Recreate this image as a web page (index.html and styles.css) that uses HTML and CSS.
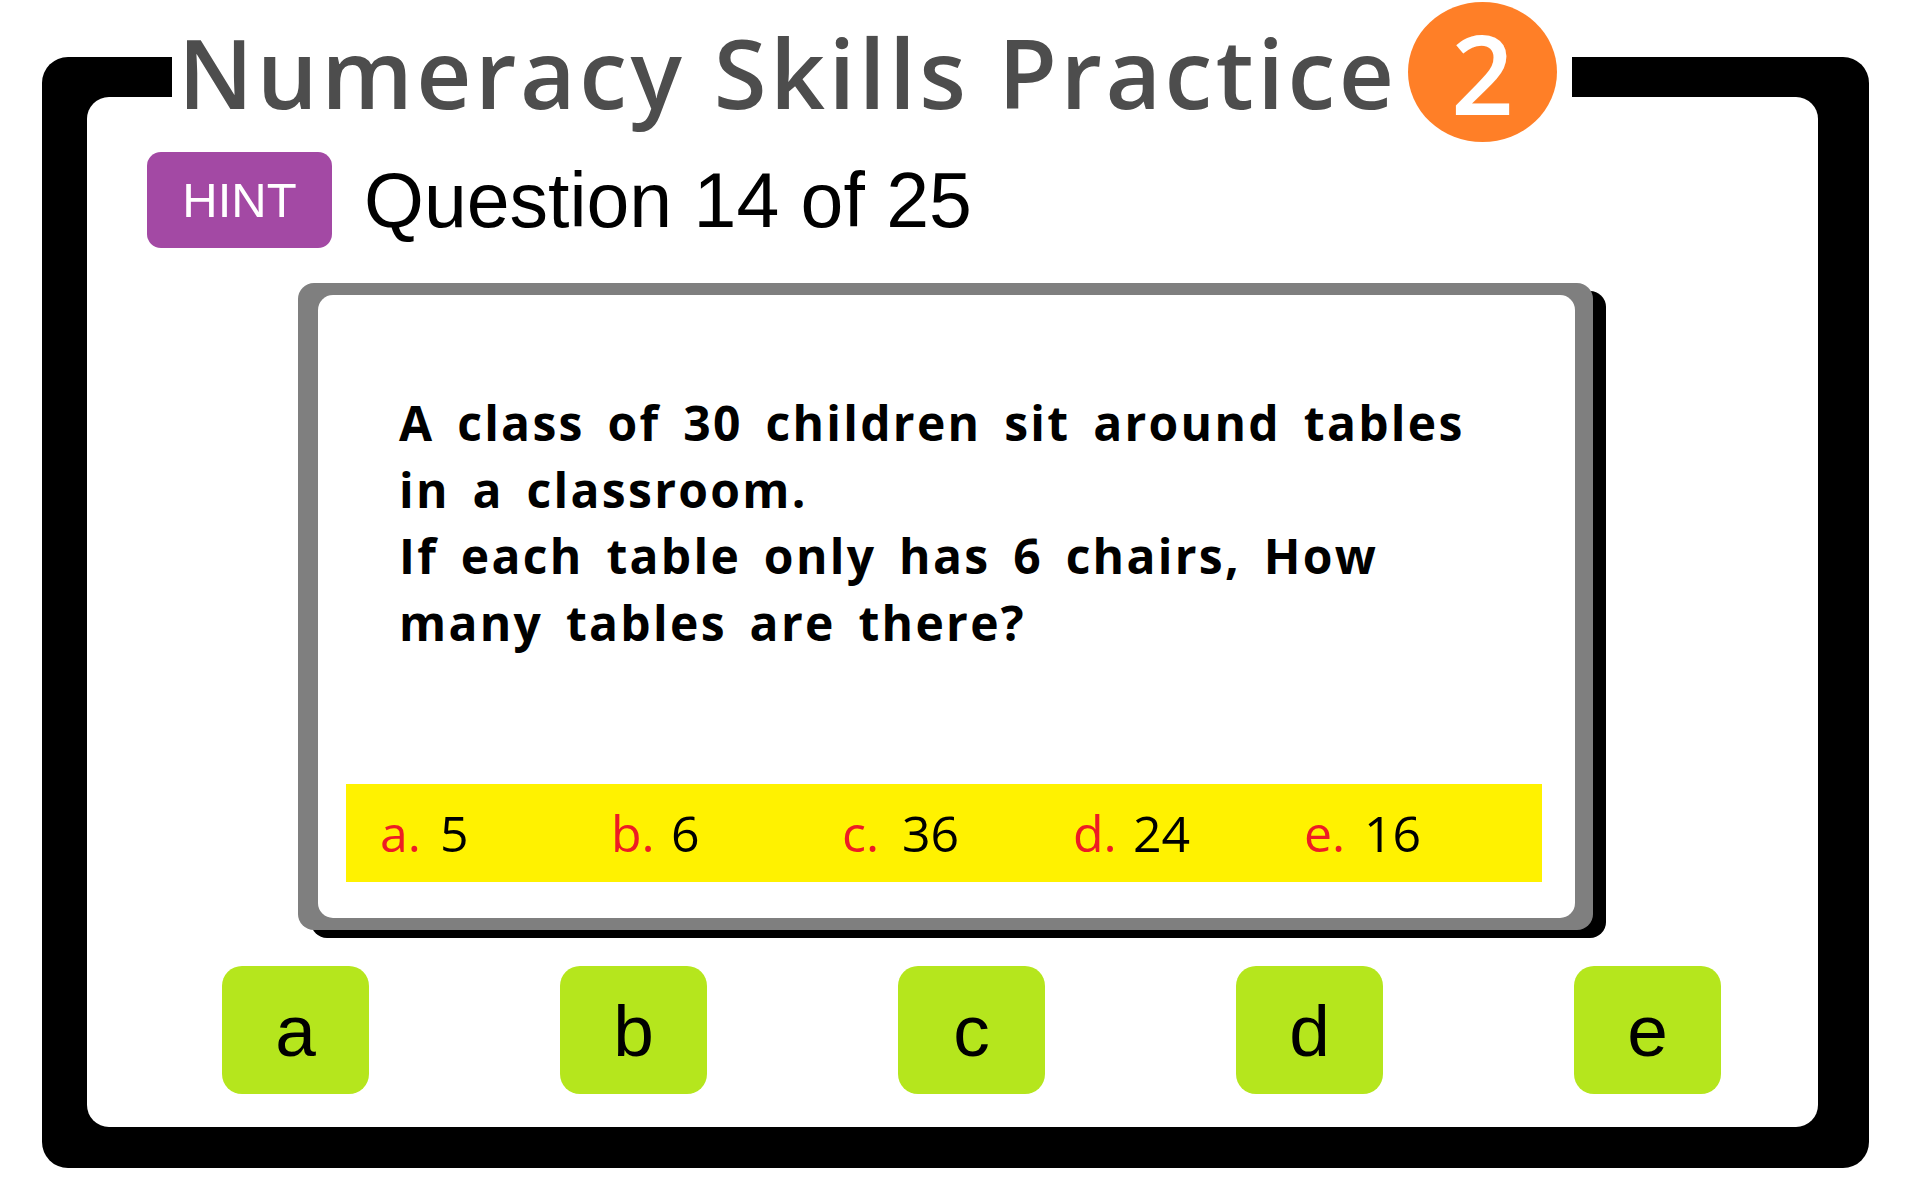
FILE: index.html
```html
<!DOCTYPE html>
<html lang="en">
<head>
<meta charset="utf-8">
<title>Numeracy Skills Practice 2</title>
<link rel="stylesheet" href="styles.css">
</head>
<body>
<div class="frame">
  <div class="title-bar">
    <h1 class="title">Numeracy Skills Practice</h1>
    <div class="badge">2</div>
  </div>
  <div class="inner">
    <div class="head">
      <button class="hint">HINT</button>
      <div class="qnum">Question 14 of 25</div>
    </div>
    <div class="card">
      <div class="card-inner">
        <p class="question">A class of 30 children sit around tables<br>in a classroom.<br>If each table only has 6 chairs, How<br>many tables are there?</p>
        <div class="options">
          <div class="opt"><span class="lbl">a.</span><span class="val">5</span></div>
          <div class="opt"><span class="lbl">b.</span><span class="val">6</span></div>
          <div class="opt"><span class="lbl">c.</span><span class="val">36</span></div>
          <div class="opt"><span class="lbl">d.</span><span class="val">24</span></div>
          <div class="opt"><span class="lbl">e.</span><span class="val">16</span></div>
        </div>
      </div>
    </div>
    <div class="answers">
      <div class="ans">a</div>
      <div class="ans">b</div>
      <div class="ans">c</div>
      <div class="ans">d</div>
      <div class="ans">e</div>
    </div>
  </div>
</div>
</body>
</html>
```
FILE: styles.css
```css
* { box-sizing: border-box; }
html, body { margin: 0; padding: 0; background: #fff; }
body { width: 1920px; height: 1200px; overflow: hidden; font-family: "Liberation Sans", Arial, sans-serif; }

.frame {
  position: relative;
  margin: 57px 0 0 42px;
  width: 1827px;
  height: 1111px;
  padding: 40px 51px 41px 45px;
  background: #000;
  border-radius: 26px;
}

.title-bar {
  position: absolute;
  top: -57px;
  left: 130px;
  width: 1400px;
  height: 146px;
  background: #fff;
  display: flex;
  align-items: flex-start;
  padding: 0 15px 0 6px;
}
.title {
  flex: 0 0 auto;
  margin: 24px 0 0 0;
  font-family: "Open Sans", sans-serif;
  font-weight: 600;
  font-size: 96px;
  line-height: 96px;
  letter-spacing: 3.5px;
  color: #4d4d4d;
  white-space: nowrap;
}
.badge {
  flex: 0 0 auto;
  margin: 2px 0 0 auto;
  width: 149px;
  height: 140px;
  border-radius: 50%;
  background: #ff7f27;
  color: #fff;
  font-family: "Open Sans", sans-serif;
  font-weight: 600;
  font-size: 110px;
  line-height: 140px;
  text-align: center;
}

.inner {
  height: 1030px;
  background: #fff;
  border-radius: 22px;
  padding-top: 55px;
}

.head {
  display: flex;
  align-items: center;
  gap: 32px;
  margin-left: 60px;
  height: 96px;
}
.hint {
  width: 185px;
  height: 96px;
  border: none;
  border-radius: 14px;
  background: #a349a4;
  color: #fff;
  font-family: "Liberation Sans", Arial, sans-serif;
  font-size: 49px;
  padding: 0;
  display: flex;
  align-items: center;
  justify-content: center;
}
.qnum {
  font-family: "Liberation Sans", Arial, sans-serif;
  font-size: 77px;
  color: #000;
}

.card {
  margin: 35px 0 0 211px;
  width: 1295px;
  padding: 12px 18px 12px 20px;
  background: #7f7f7f;
  border-radius: 16px;
  box-shadow: 13px 8px 0 #000;
}
.card-inner {
  height: 623px;
  background: #fff;
  border-radius: 15px;
  padding: 95px 33px 36px 28px;
  display: flex;
  flex-direction: column;
}
.question {
  margin: 0;
  padding-left: 53px;
  font-family: "Open Sans", sans-serif;
  font-weight: 700;
  font-size: 48px;
  line-height: 66.5px;
  letter-spacing: 2.3px;
  word-spacing: 8px;
  color: #000;
}
.options {
  margin-top: auto;
  height: 98px;
  background: #fff200;
  display: flex;
  align-items: center;
  padding-left: 34px;
  font-family: "Open Sans", sans-serif;
  font-size: 50px;
  color: #000;
}
.opt { width: 231px; white-space: nowrap; }
.lbl { display: inline-block; width: 60px; color: #ed1c24; }

.answers {
  display: flex;
  gap: 191px;
  margin: 36px 0 0 135px;
}
.ans {
  width: 147px;
  height: 128px;
  border-radius: 20px;
  background: #b5e61d;
  display: flex;
  align-items: center;
  justify-content: center;
  font-family: "Liberation Sans", Arial, sans-serif;
  font-size: 73px;
  color: #000;
}
```
